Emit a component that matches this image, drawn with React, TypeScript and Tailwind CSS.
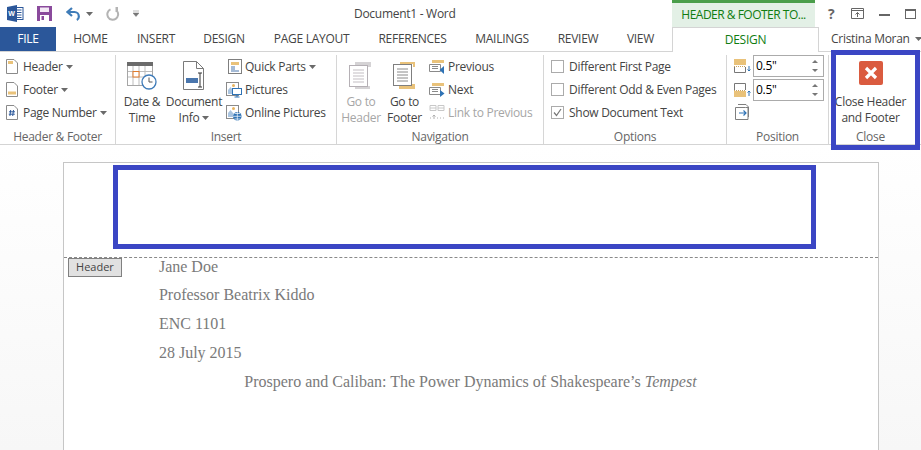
import React from 'react';

const uiFont = "font-['Open_Sans','Noto_Sans',sans-serif]";

const Caret = ({ className = '' }: { className?: string }) => (
	<svg width="7" height="4" viewBox="0 0 7 4" className={className}>
		<path d="M0 0h7L3.5 4z" fill="#6a6a6a" />
	</svg>
);

const WordLogo = () => (
	<svg width="17" height="17" viewBox="0 0 17 17">
		<rect x="6.500" y="2.500" width="9.500" height="12" fill="#fff" stroke="#2b579a" />
		<path d="M10 5h4.500M10 7.500h4.500M10 10h4.500M10 12.500h4.500" stroke="#2b579a" />
		<path d="M0 2l10-2v17L0 15z" fill="#2b579a" />
		<text x="1.300" y="11" fontSize="7" fontWeight="700" fill="#fff" fontFamily="Liberation Sans">W</text>
	</svg>
);

const SaveIcon = () => (
	<svg width="15" height="15" viewBox="0 0 15 15">
		<path d="M0 0h15v15H0z" fill="#8a4a9c" />
		<rect x="3" y="1.500" width="9" height="4.500" fill="#f3e9f5" />
		<rect x="3" y="9" width="9" height="6" fill="#fff" />
		<rect x="4.500" y="10" width="2.500" height="4" fill="#8a4a9c" />
	</svg>
);

const UndoIcon = () => (
	<svg width="16" height="14" viewBox="0 0 16 14">
		<path d="M6 1L1.500 5 6 9" fill="none" stroke="#3f7cb8" strokeWidth="2.200" />
		<path d="M2 5h6.500a4.300 4.300 0 0 1 4.300 4.300V10a3.500 3.500 0 0 1-2 3" fill="none" stroke="#3f7cb8" strokeWidth="2.200" />
	</svg>
);

const RedoIcon = () => (
	<svg width="14" height="14" viewBox="0 0 14 14">
		<path d="M4.500 2.400A5.400 5.400 0 1 0 11 4" fill="none" stroke="#b4b4b4" strokeWidth="2" />
		<path d="M9.500 0v5h2.500V0z" fill="#b4b4b4" />
	</svg>
);

const PageIcon = ({ band }: { band: 'top' | 'bottom' }) => (
	<svg width="12" height="15" viewBox="0 0 12 15">
		<path d="M.5.500h7.500l3.500 3.500v10.500H.5z" fill="#fff" stroke="#8a8a8a" />
		{band === 'top' ? <rect x="2" y="2" width="5" height="3" fill="#e9c27a" /> : <rect x="2" y="9.500" width="8" height="3" fill="#e9c27a" />}
	</svg>
);

const NumberIcon = () => (
	<svg width="12" height="15" viewBox="0 0 12 15">
		<path d="M.5.500h7.500l3.500 3.500v10.500H.5z" fill="#fff" stroke="#8a8a8a" />
		<path d="M4.700 5l-.8 6M7.500 5l-.8 6M3 6.800h6M2.800 9.200h6" stroke="#2b579a" />
	</svg>
);

const CalendarIcon = () => (
	<svg width="30" height="28" viewBox="0 0 30 28">
		<rect x=".5" y=".5" width="25" height="23" fill="#fff" stroke="#a6a6a6" />
		<rect x="0" y="0" width="26" height="4" fill="#6b6b6b" />
		<path d="M6 4v19M12 4v19M18 4v19M1 9.500h24M1 15h24" stroke="#bdbdbd" />
		<rect x="6" y="9.500" width="6" height="5.500" fill="#fff" stroke="#e07b2c" />
		<circle cx="22" cy="20" r="7" fill="#fff" stroke="#3d7ab8" strokeWidth="1.300" />
		<path d="M22 15.500V20h3.500" fill="none" stroke="#555" />
	</svg>
);

const DocInfoIcon = () => (
	<svg width="22" height="30" viewBox="0 0 22 30">
		<path d="M.5.500h13l7 7v21H.5z" fill="#fff" stroke="#7a7a7a" />
		<path d="M13.500.5v7h7" fill="none" stroke="#7a7a7a" />
		<rect x="3" y="17" width="12" height="5" fill="#4a76ad" />
		<path d="M15 12h4M15 26h4M17 12v14" fill="none" stroke="#333" />
	</svg>
);

const QuickPartsIcon = () => (
	<svg width="14" height="15" viewBox="0 0 14 15">
		<rect x=".5" y=".5" width="13" height="14" fill="#fff" stroke="#7f7f7f" />
		<rect x="3" y="3" width="8" height="3" fill="#e9c27a" />
		<path d="M3 8h4M3 10h4M3 12h8" stroke="#4a76ad" />
	</svg>
);

const PicturesIcon = ({ online }: { online?: boolean }) => (
	<svg width="16" height="16" viewBox="0 0 16 16">
		<rect x=".5" y=".5" width="12" height="13" fill="#fff" stroke="#8a8a8a" />
		<circle cx="7.500" cy="3.500" r="1.500" fill="#e9b45f" />
		<path d="M2 12V8l2.500-3L7 8v4z" fill="#a9c4e0" />
		{online ? (
			<>
				<circle cx="11.300" cy="11.300" r="4.300" fill="#2f73b5" />
				<path d="M7 11.300h8.600M11.300 7v8.600M8.500 8.500h5.600M8.500 14h5.600" stroke="#fff" strokeWidth=".7" />
			</>
		) : (
			<>
				<rect x="6.500" y="6.500" width="9" height="6" fill="#fff" stroke="#2f73b5" />
				<path d="M11 13v2M8.500 15h5" stroke="#2f73b5" />
			</>
		)}
	</svg>
);

const GoToIcon = ({ target }: { target: 'header' | 'footer' }) =>
	target === 'header' ? (
		<svg width="24" height="30" viewBox="0 0 24 30">
			<path d="M6 1h16v5H6z" fill="#d5d3d5" />
			<path d="M6 25h15v3H6z" fill="#d5d3d5" />
			<rect x=".5" y="4.500" width="18" height="21" fill="#fff" stroke="#b5b0b5" />
			<path d="M4 9h11M4 12h11M4 15h11M4 18h11M4 21h11" stroke="#c3bec3" />
		</svg>
	) : (
		<svg width="24" height="30" viewBox="0 0 24 30">
			<path d="M7 1h15v2H7zM20 1h2v5h-2z" fill="#e9c27a" />
			<path d="M6 23h16v5H6z" fill="#e9c27a" />
			<rect x=".5" y="3.500" width="18" height="21" fill="#fff" stroke="#7f7f7f" />
			<path d="M4 8h11M4 11h11M4 14h11M4 17h11M4 20h11" stroke="#8a8a8a" />
		</svg>
	);

const NavIcon = ({ dir }: { dir: 'prev' | 'next' }) => (
	<svg width="16" height="15" viewBox="0 0 16 15">
		<path d="M3 1h12v3H3z" fill="#e9c27a" />
		<path d="M.5 5.500h11v7H.5z" fill="#fff" stroke="#8a8a8a" />
		<path d="M3 7.500h6M3 9.500h6" stroke="#8a8a8a" />
		{dir === 'prev' ? <path d="M15 7v8l-4.500-4z" fill="#2f73b5" /> : <path d="M11 8v7l4.500-3.500z" fill="#2f73b5" />}
	</svg>
);

const LinkIcon = () => (
	<svg width="16" height="15" viewBox="0 0 16 15">
		<path d="M1 .5h6v5H1zM9 .5h6v5H9z" fill="#fff" stroke="#c8c8c8" />
		<path d="M1 3h6M9 3h6" stroke="#c8c8c8" />
		<path d="M5 14v-4M3.500 11.500L5 10l1.500 1.500M1 13h1M8 13h1M11 13h1M14 13h1" fill="none" stroke="#b0b0b0" />
	</svg>
);

const Checkbox = ({ checked }: { checked?: boolean }) => (
	<span className="w-[13px] h-[13px] border border-[#ababab] bg-white flex items-center justify-center shrink-0">
		{checked && (
			<svg width="9" height="9" viewBox="0 0 9 9">
				<path d="M1 4.500L3.500 7.500 8 1" fill="none" stroke="#777" strokeWidth="1.200" />
			</svg>
		)}
	</span>
);

const HeaderPosIcon = ({ up }: { up?: boolean }) => (
	<svg width="18" height="14" viewBox="0 0 18 14">
		{up ? (
			<>
				<path d="M1.500 7V.5h11V7" fill="none" stroke="#777" />
				<path d="M1 7.500h12" stroke="#c9a25e" strokeDasharray="1 1" />
				<path d="M1 8h12v6H1z" fill="#e9c27a" />
				<path d="M16 13V8M14.500 9.500L16 8l1.500 1.500" fill="none" stroke="#2f73b5" />
			</>
		) : (
			<>
				<path d="M1 0h12v6H1z" fill="#e9c27a" />
				<path d="M1 7.500h12" stroke="#c9a25e" strokeDasharray="1 1" />
				<path d="M1.500 8v5.500h11V8" fill="none" stroke="#777" />
				<path d="M16 7v5M14.500 10.500L16 12l1.500-1.500" fill="none" stroke="#2f73b5" />
			</>
		)}
	</svg>
);

const AlignTabIcon = () => (
	<svg width="14" height="16" viewBox="0 0 14 16">
		<path d="M.5 3.500h10l2.500 0v12H.5z" fill="#fff" stroke="#7f7f7f" />
		<path d="M3 .5h8l2.500 2.500v10" fill="none" stroke="#7f7f7f" />
		<path d="M4 9h7M8.500 6.500L11 9l-2.500 2.500" fill="none" stroke="#2f73b5" strokeWidth="1.200" />
	</svg>
);

const CloseIcon = () => (
	<svg width="24" height="24" viewBox="0 0 24 24">
		<rect width="24" height="24" rx="2" fill="#da5b3f" />
		<path d="M7 7l10 10M17 7L7 17" stroke="#fff" strokeWidth="3.200" />
	</svg>
);

const SmallRow = ({ icon, label, caret, muted, iconW = 'w-[17px]' }: { icon: React.ReactNode; label: string; caret?: boolean; muted?: boolean; iconW?: string }) => (
	<div className={`h-[23px] flex items-center whitespace-nowrap ${muted ? 'text-[#a6a6a6]' : 'text-[#444]'}`}>
		<span className={`${iconW} flex items-center justify-start shrink-0`}>{icon}</span>
		<span>{label}</span>
		{caret && <Caret className="ml-[3px]" />}
	</div>
);

const BigButton = ({ icon, lines, caret, muted, width, iconH = 'h-[37px]' }: { icon: React.ReactNode; lines: string[]; caret?: boolean; muted?: boolean; width: string; iconH?: string }) => (
	<div className={`flex flex-col items-center shrink-0 pt-[2px] ${width} ${muted ? 'text-[#a6a6a6]' : 'text-[#444]'}`}>
		<div className={`${iconH} flex items-center justify-center`}>{icon}</div>
		<div className="leading-[16px] text-center whitespace-nowrap">{lines[0]}</div>
		<div className="leading-[16px] text-center whitespace-nowrap flex items-center">
			{lines[1]}
			{caret && <Caret className="ml-[3px]" />}
		</div>
	</div>
);

const Group = ({ label, width, children }: { label: string; width: string; children: React.ReactNode }) => (
	<div className={`${width} shrink-0 h-[89px] flex flex-col border-r border-[#d6d6d6]`}>
		<div className="h-[71px] flex">{children}</div>
		<div className="mt-auto h-[15px] leading-[15px] text-center text-[#666]">{label}</div>
	</div>
);

const Spinner = ({ value }: { value: string }) => (
	<div className="w-[71px] h-[22px] border border-[#ababab] bg-white flex items-center justify-between pl-[2px] pr-[5px] text-black">
		<span>{value}</span>
		<span className="flex flex-col gap-[6px]">
			<svg width="6" height="3" viewBox="0 0 6 3"><path d="M3 0l3 3H0z" fill="#777" /></svg>
			<svg width="6" height="3" viewBox="0 0 6 3"><path d="M0 0h6L3 3z" fill="#777" /></svg>
		</span>
	</div>
);

const tabs = [
	{ name: 'HOME', w: 'w-[69px]' },
	{ name: 'INSERT', w: 'w-[62px]' },
	{ name: 'DESIGN', w: 'w-[74px]' },
	{ name: 'PAGE LAYOUT', w: 'w-[101px]' },
	{ name: 'REFERENCES', w: 'w-[101px]' },
	{ name: 'MAILINGS', w: 'w-[78px]' },
	{ name: 'REVIEW', w: 'w-[74px]' },
	{ name: 'VIEW', w: 'w-[51px]' },
];

const App: React.FC = () => {
	return (
		<div className={`relative w-[921px] h-[450px] overflow-hidden bg-white text-[12px] tracking-[-0.28px] text-[#444] ${uiFont}`}>
			{/* title bar */}
			<div className="h-[27px] flex items-center relative">
				<div className="flex items-center pl-[7px] w-[350px]">
					<WordLogo />
					<span className="ml-[13px]"><SaveIcon /></span>
					<span className="ml-[14px]"><UndoIcon /></span>
					<Caret className="ml-[4px]" />
					<span className="ml-[13px]"><RedoIcon /></span>
					<svg width="6" height="7" viewBox="0 0 6 7" className="ml-[13px]"><path d="M0 1h6M0 3h6L3 6.500 0 3z" fill="#777" stroke="#777" strokeWidth=".5" /></svg>
				</div>
				<div className="w-[322px] pl-[4px] text-[#444] whitespace-nowrap">Document1 - Word</div>
				<div className="w-[143px] h-[27px] bg-[#e3f0e6] border-t-[3px] border-[#4a9e4a] text-[#107c10] text-center leading-[24px] whitespace-nowrap tracking-[-0.5px]">HEADER &amp; FOOTER TO...</div>
				<div className="flex items-center ml-[13px] gap-[15px] text-[#666]">
					<span className="font-bold text-[14px] leading-none w-[8px]">?</span>
					<svg width="13" height="11" viewBox="0 0 13 11"><path d="M.5.500h12v10H.5zM1 2.500h11M6.500 9V4.500M4.500 6.500l2-2 2 2" fill="none" stroke="#666" /></svg>
					<span className="w-[11px] h-[2px] bg-[#666] mt-[3px]" />
					<span className="w-[11px] h-[10px] border border-[#666] border-t-2" />
				</div>
			</div>

			{/* tabs */}
			<div className="h-[25px] flex items-stretch relative border-b border-[#d4d4d4]">
				<div className="w-[56px] shrink-0 bg-[#2b579a] text-white flex items-center justify-center">FILE</div>
				{tabs.map((t) => (
					<div key={t.name} className={`${t.w} shrink-0 flex items-center justify-center text-[#444] whitespace-nowrap`}>
						{t.name}
					</div>
				))}
				<div className="w-[147px] shrink-0 ml-[6px] h-[25px] bg-white border border-b-0 border-[#d4d4d4] text-[#107c10] flex items-center justify-center">DESIGN</div>
				<div className="flex items-center ml-[12px] whitespace-nowrap text-[#444]">
					Cristina Moran
					<Caret className="ml-[5px]" />
				</div>
			</div>

			{/* ribbon */}
			<div className="h-[93px] flex border-b border-[#d4d4d4] pt-[3px]">
				<Group label="Header & Footer" width="w-[116px]">
					<div className="pl-[6px]">
						<SmallRow icon={<PageIcon band="top" />} label="Header" caret />
						<SmallRow icon={<PageIcon band="bottom" />} label="Footer" caret />
						<SmallRow icon={<NumberIcon />} label="Page Number" caret />
					</div>
				</Group>
				<Group label="Insert" width="w-[221px]">
					<div className="pl-[4px] flex">
						<BigButton icon={<CalendarIcon />} lines={['Date &', 'Time']} width="w-[44px]" />
						<BigButton icon={<DocInfoIcon />} lines={['Document', 'Info']} caret width="w-[60px]" />
					</div>
					<div className="pl-[2px]">
						<SmallRow icon={<span className="pl-[2px]"><QuickPartsIcon /></span>} label="Quick Parts" caret iconW="w-[19px]" />
						<SmallRow icon={<PicturesIcon />} label="Pictures" iconW="w-[19px]" />
						<SmallRow icon={<PicturesIcon online />} label="Online Pictures" iconW="w-[19px]" />
					</div>
				</Group>
				<Group label="Navigation" width="w-[207px]">
					<div className="flex pl-[1px]">
						<BigButton icon={<GoToIcon target="header" />} lines={['Go to', 'Header']} muted width="w-[46px]" />
						<BigButton icon={<GoToIcon target="footer" />} lines={['Go to', 'Footer']} width="w-[41px]" />
					</div>
					<div className="pl-[4px]">
						<SmallRow icon={<NavIcon dir="prev" />} label="Previous" iconW="w-[19px]" />
						<SmallRow icon={<NavIcon dir="next" />} label="Next" iconW="w-[19px]" />
						<SmallRow icon={<LinkIcon />} label="Link to Previous" muted iconW="w-[19px]" />
					</div>
				</Group>
				<Group label="Options" width="w-[183px]">
					<div className="pl-[7px]">
						<SmallRow icon={<Checkbox />} label="Different First Page" iconW="w-[18px]" />
						<SmallRow icon={<Checkbox />} label="Different Odd & Even Pages" iconW="w-[18px]" />
						<SmallRow icon={<Checkbox checked />} label="Show Document Text" iconW="w-[18px]" />
					</div>
				</Group>
				<Group label="Position" width="w-[102px]">
					<div className="pl-[6px] flex flex-col gap-[2px]">
						<div className="flex items-center gap-[2px]"><HeaderPosIcon /><Spinner value={'0.5"'} /></div>
						<div className="flex items-center gap-[2px]"><HeaderPosIcon up /><Spinner value={'0.5"'} /></div>
						<div className="mt-[1px] pl-[2px]"><AlignTabIcon /></div>
					</div>
				</Group>
				<div className="w-[83px] shrink-0 h-[89px] flex flex-col">
					<div className="h-[71px] flex justify-center">
						<BigButton icon={<CloseIcon />} lines={['Close Header', 'and Footer']} width="w-[83px]" iconH="h-[37px] pb-[6px]" />
					</div>
					<div className="mt-auto h-[15px] leading-[15px] text-center text-[#666]">Close</div>
				</div>
			</div>

			{/* document */}
			<div className="h-[305px] bg-gradient-to-b from-white to-[#f7f7f7] pt-[17px] pl-[63px] overflow-hidden">
				<div className="w-[816px] h-[300px] bg-white border border-[#c6c6c6] font-['Liberation_Serif',serif] text-[16px] tracking-normal text-[#7a7a7a]">
					<div className="h-[95px] border-b border-dashed border-[#8a8a8a]" />
					<div className="flex">
						<div className={`ml-[4px] w-[54px] h-[19px] bg-[#e1e1e1] border border-[#808080] text-[11px] text-[#444] flex items-center justify-center ${uiFont}`}>Header</div>
						<div className="ml-[37px] w-[720px]">
							<p className="leading-[28.75px] -mt-[5.5px]">Jane Doe</p>
							<p className="leading-[28.75px]">Professor Beatrix Kiddo</p>
							<p className="leading-[28.75px]">ENC 1101</p>
							<p className="leading-[28.75px]">28 July 2015</p>
							<p className="leading-[28.75px] text-center pr-[96px]">
								Prospero and Caliban: The Power Dynamics of Shakespeare’s <em>Tempest</em>
							</p>
						</div>
					</div>
				</div>
			</div>

			{/* annotation rectangles */}
			<div className="absolute left-[113px] top-[165px] w-[703px] h-[84px] border-[5px] border-[#3b46c4]" />
			<div className="absolute left-[831px] top-[50px] w-[89px] h-[100px] border-[5px] border-[#3b46c4]" />
		</div>
	);
};

export default App;
